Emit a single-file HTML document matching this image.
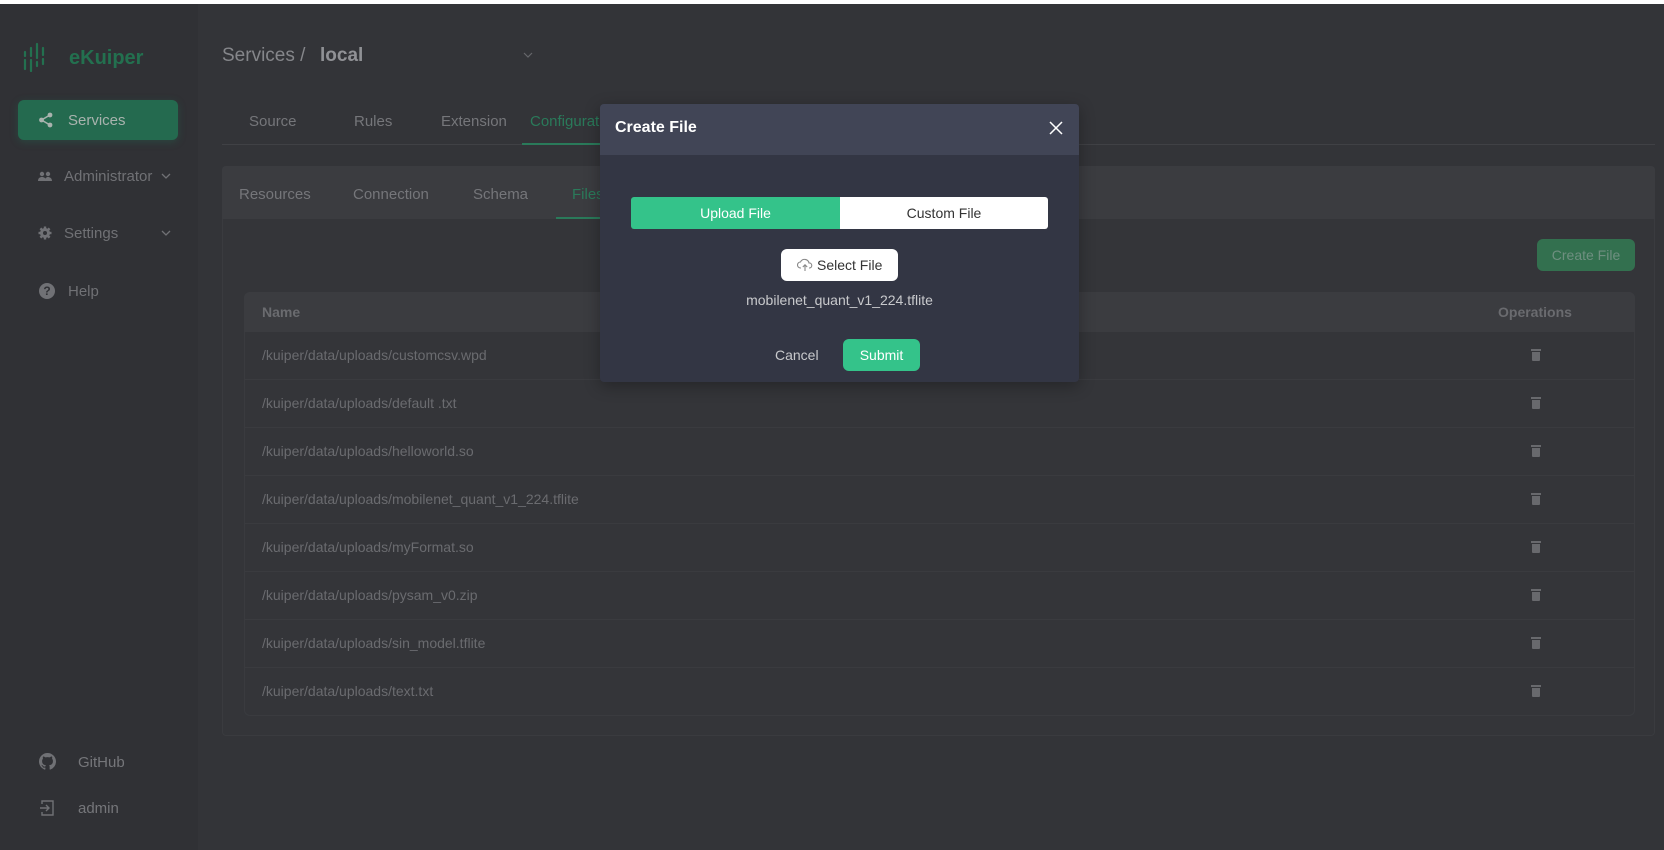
<!DOCTYPE html>
<html><head><meta charset="utf-8"><style>
*{box-sizing:border-box;margin:0;padding:0}
body{width:1664px;height:850px;overflow:hidden;background:#333438;font-family:"Liberation Sans",sans-serif;position:relative;color:#808185}
.a{position:absolute;white-space:nowrap}
</style></head><body>
<div class="a" style="left:0;top:0;width:1664px;height:4px;background:#fff"></div>
<div class="a" style="left:0;top:4px;width:198px;height:846px;background:#303135"></div>
<svg class="a" style="left:23px;top:42px" width="26" height="30" viewBox="0 0 26 30"><g stroke="#23704f" stroke-width="2.2" stroke-linecap="round"><line x1="2" y1="10" x2="2" y2="14"/><line x1="2" y1="18" x2="2" y2="27"/><line x1="8" y1="6" x2="8" y2="14"/><line x1="8" y1="18" x2="8" y2="29"/><line x1="14" y1="2" x2="14" y2="16"/><line x1="14" y1="20" x2="14" y2="24"/><line x1="20" y1="6" x2="20" y2="13"/><line x1="20" y1="17" x2="20" y2="22"/></g></svg>
<div class="a" style="left:69px;top:47px;font-size:20px;font-weight:bold;color:#23704f">eKuiper</div>
<div class="a" style="left:18px;top:100px;width:160px;height:40px;background:#246a4f;border-radius:6px;box-shadow:0 2px 8px rgba(36,106,79,.4)"></div>
<svg class="a" style="left:38px;top:112px" width="16" height="16" viewBox="0 0 16 16"><g fill="#a9b3ae"><circle cx="12" cy="3" r="2.4"/><circle cx="12" cy="13" r="2.4"/><circle cx="3.5" cy="8" r="2.4"/></g><path d="M12 3L3.5 8L12 13" stroke="#a9b3ae" stroke-width="1.5" fill="none"/></svg>
<div class="a" style="left:68px;top:112px;font-size:15px;color:#a9b3ae">Services</div>
<svg class="a" style="left:38px;top:171px" width="14" height="10" viewBox="0 0 14 10"><g fill="#707175"><circle cx="4" cy="3" r="2.2"/><circle cx="10" cy="3" r="2.2"/><path d="M0 10c0-3 2-4 4-4s4 1 4 4zM7 10c0-3 1.5-4 3-4s4 1 4 4z"/></g></svg>
<div class="a" style="left:64px;top:168px;font-size:15px;color:#707175">Administrator</div>
<svg class="a" style="left:161px;top:173px" width="10" height="6" viewBox="0 0 10 6"><path d="M1 1l4 4 4-4" stroke="#707175" stroke-width="1.3" fill="none"/></svg>
<svg class="a" style="left:38px;top:226px" width="14" height="14" viewBox="0 0 14 14"><circle cx="7" cy="7" r="5" fill="#707175"/><g stroke="#707175" stroke-width="2.4"><line x1="7" y1="0.5" x2="7" y2="13.5"/><line x1="0.5" y1="7" x2="13.5" y2="7"/><line x1="2.4" y1="2.4" x2="11.6" y2="11.6"/><line x1="11.6" y1="2.4" x2="2.4" y2="11.6"/></g><circle cx="7" cy="7" r="2" fill="#303135"/></svg>
<div class="a" style="left:64px;top:225px;font-size:15px;color:#707175">Settings</div>
<svg class="a" style="left:161px;top:230px" width="10" height="6" viewBox="0 0 10 6"><path d="M1 1l4 4 4-4" stroke="#707175" stroke-width="1.3" fill="none"/></svg>
<div class="a" style="left:39px;top:283px;width:16px;height:16px;border-radius:50%;background:#707175;color:#303135;font-size:12px;font-weight:bold;text-align:center;line-height:16px">?</div>
<div class="a" style="left:68px;top:283px;font-size:15px;color:#707175">Help</div>
<svg class="a" style="left:39px;top:753px" width="17" height="17" viewBox="0 0 16 16"><path fill="#707175" d="M8 0C3.58 0 0 3.58 0 8c0 3.54 2.290 6.530 5.470 7.590.4.07.55-.17.55-.38 0-.19-.01-.82-.01-1.49-2.010.37-2.530-.49-2.690-.94-.09-.23-.48-.94-.82-1.130-.28-.15-.68-.52-.01-.53.63-.01 1.080.58 1.230.82.72 1.210 1.870.87 2.330.66.07-.52.28-.87.51-1.070-1.780-.2-3.640-.89-3.640-3.950 0-.87.31-1.590.82-2.150-.08-.2-.36-1.020.08-2.120 0 0 .67-.21 2.200.82.64-.18 1.320-.27 2-.27.68 0 1.360.09 2 .27 1.530-1.040 2.200-.82 2.200-.82.44 1.100.16 1.920.08 2.120.51.56.82 1.270.82 2.150 0 3.070-1.870 3.750-3.650 3.950.29.25.54.73.54 1.480 0 1.070-.01 1.930-.01 2.200 0 .21.15.46.55.38A8.013 8.013 0 0016 8c0-4.420-3.580-8-8-8z"/></svg>
<div class="a" style="left:78px;top:754px;font-size:15px;color:#75767a">GitHub</div>
<svg class="a" style="left:39px;top:799px" width="16" height="17" viewBox="0 0 16 17"><path d="M3 5V2h11v14H3v-3" stroke="#707175" stroke-width="1.4" fill="none"/><path d="M1 9h9M7 6l3 3-3 3" stroke="#707175" stroke-width="1.4" fill="none"/></svg>
<div class="a" style="left:78px;top:800px;font-size:15px;color:#75767a">admin</div>
<div class="a" style="left:222px;top:45px;font-size:19px;color:#85868a">Services /</div>
<div class="a" style="left:320px;top:45px;font-size:19px;font-weight:bold;color:#909195">local</div>
<svg class="a" style="left:523px;top:52px" width="10" height="6" viewBox="0 0 10 6"><path d="M1 1l4 4 4-4" stroke="#66676b" stroke-width="1.2" fill="none"/></svg>
<div class="a" style="left:222px;top:144px;width:1433px;height:1px;background:#404145"></div>
<div class="a" style="left:249px;top:113px;font-size:15px;color:#75767a">Source</div>
<div class="a" style="left:354px;top:113px;font-size:15px;color:#75767a">Rules</div>
<div class="a" style="left:441px;top:113px;font-size:15px;color:#75767a">Extension</div>
<div class="a" style="left:530px;top:113px;font-size:15px;color:#2a7a5a">Configuration</div>
<div class="a" style="left:522px;top:143px;width:120px;height:2px;background:#2a7a5a"></div>
<div class="a" style="left:222px;top:166px;width:1433px;height:570px;background:#343539;border:1px solid #3a3b3f;border-radius:4px"></div>
<div class="a" style="left:222px;top:166px;width:1433px;height:53px;background:#3b3c40;border-radius:4px 4px 0 0"></div>
<div class="a" style="left:239px;top:186px;font-size:15px;color:#75767a">Resources</div>
<div class="a" style="left:353px;top:186px;font-size:15px;color:#75767a">Connection</div>
<div class="a" style="left:473px;top:186px;font-size:15px;color:#75767a">Schema</div>
<div class="a" style="left:572px;top:186px;font-size:15px;color:#2a7a5a">Files</div>
<div class="a" style="left:556px;top:217px;width:50px;height:2px;background:#2a7a5a"></div>
<div class="a" style="left:1537px;top:239px;width:98px;height:32px;background:#33704f;border-radius:6px;color:#6f8f80;font-size:14px;text-align:center;line-height:32px">Create File</div>
<div class="a" style="left:244px;top:292px;width:1391px;height:424px;border:1px solid #3a3b3f;border-radius:6px;background:#343539"></div>
<div class="a" style="left:244px;top:292px;width:1391px;height:40px;background:#3b3c40;border-radius:6px 6px 0 0"></div>
<div class="a" style="left:262px;top:304px;font-size:14px;font-weight:bold;color:#6a6b6f">Name</div>
<div class="a" style="left:1498px;top:304px;font-size:14px;font-weight:bold;color:#6a6b6f">Operations</div>
<div class="a" style="left:244px;top:332px;width:1391px">
<style>.r{height:48px;border-bottom:1px solid #3a3b3f;position:relative;font-size:14px;color:#6a6b6f}.r span{position:absolute;left:18px;top:15px}.r i{position:absolute;left:1287px;top:17px;width:10px;height:12px}.r i:before{content:"";position:absolute;left:1px;top:3px;width:8px;height:9px;background:#68696d;border-radius:0 0 1px 1px}.r i:after{content:"";position:absolute;left:0;top:0;width:10px;height:2px;background:#68696d}</style>
<div class="r"><span>/kuiper/data/uploads/customcsv.wpd</span><i></i></div>
<div class="r"><span>/kuiper/data/uploads/default .txt</span><i></i></div>
<div class="r"><span>/kuiper/data/uploads/helloworld.so</span><i></i></div>
<div class="r"><span>/kuiper/data/uploads/mobilenet_quant_v1_224.tflite</span><i></i></div>
<div class="r"><span>/kuiper/data/uploads/myFormat.so</span><i></i></div>
<div class="r"><span>/kuiper/data/uploads/pysam_v0.zip</span><i></i></div>
<div class="r"><span>/kuiper/data/uploads/sin_model.tflite</span><i></i></div>
<div class="r" style="border-bottom:none"><span>/kuiper/data/uploads/text.txt</span><i></i></div>
</div>
<div class="a" style="left:600px;top:104px;width:479px;height:278px;background:#333644;border-radius:4px;box-shadow:0 4px 16px rgba(0,0,0,.3);overflow:hidden">
<div style="height:51px;background:#414556"></div>
</div>
<div class="a" style="left:615px;top:119px;font-size:16px;font-weight:bold;color:#fff">Create File</div>
<svg class="a" style="left:1049px;top:121px" width="14" height="14" viewBox="0 0 14 14"><path d="M1 1L13 13M13 1L1 13" stroke="#fff" stroke-width="1.5"/></svg>
<div class="a" style="left:631px;top:197px;width:209px;height:32px;background:#34c38a;border-radius:3px 0 0 3px;color:#fff;font-size:14px;text-align:center;line-height:32px">Upload File</div>
<div class="a" style="left:840px;top:197px;width:208px;height:32px;background:#fff;border-radius:0 3px 3px 0;color:#333;font-size:14px;text-align:center;line-height:32px">Custom File</div>
<div class="a" style="left:781px;top:249px;width:117px;height:32px;background:#fff;border-radius:6px;color:#333;font-size:14px;line-height:32px;padding-left:36px">Select File</div>
<svg class="a" style="left:797px;top:258px" width="16" height="14" viewBox="0 0 16 14"><path d="M4 10H3.5a3 3 0 010-6 4.5 4.5 0 018.5 1 2.5 2.5 0 01.5 5H12M8 13V7M5.8 9L8 6.8 10.2 9" stroke="#888" stroke-width="1.1" fill="none"/></svg>
<div class="a" style="left:600px;top:292px;width:479px;text-align:center;font-size:14px;color:#c8c9cc">mobilenet_quant_v1_224.tflite</div>
<div class="a" style="left:775px;top:347px;font-size:14px;color:#c8c9cc">Cancel</div>
<div class="a" style="left:843px;top:339px;width:77px;height:32px;background:#34c38a;border-radius:6px;color:#fff;font-size:14px;text-align:center;line-height:32px">Submit</div>
</body></html>
